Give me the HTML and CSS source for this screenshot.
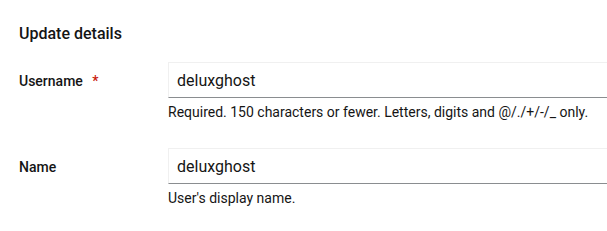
FILE: index.html
```html
<!DOCTYPE html>
<html lang="en">
<head>
  <meta charset="UTF-8" />
  <title>Update details</title>
  <link rel="stylesheet" href="styles.css">
</head>
<body>
  <div class="panel">
    <h2 class="title">Update details</h2>

    <div class="row">
      <label class="label" for="username">Username <span class="req">*</span></label>
      <div class="field">
        <input class="input" id="username" type="text" value="deluxghost" />
        <div class="helper">Required. 150 characters or fewer. Letters, digits and @/./+/-/_ only.</div>
      </div>
    </div>

    <div class="row">
      <label class="label" for="name">Name</label>
      <div class="field">
        <input class="input" id="name" type="text" value="deluxghost" />
        <div class="helper">User's display name.</div>
      </div>
    </div>
  </div>
</body>
</html>
```

FILE: styles.css
```css
html, body {
  margin: 0;
  padding: 0;
  background: #fff;
  overflow: hidden;
  font-family: Roboto, sans-serif;
  color: #151515;
}

.panel {
  padding: 22px 0 0 19px;
}

.title {
  margin: 0 0 16px;
  font-size: 16px;
  line-height: 24px;
  font-weight: 500;
}

.row {
  display: grid;
  grid-template-columns: 149px 1fr;
  margin-bottom: 25px;
}

.label {
  font-size: 14px;
  font-weight: 500;
  line-height: 21px;
  padding-top: 9px;
}

.req {
  color: #c9190b;
  margin-left: 6px;
}

.input {
  display: block;
  box-sizing: border-box;
  width: 100%;
  height: 36px;
  margin: 0;
  padding: 5px 8px;
  font-family: inherit;
  font-size: 16px;
  color: #151515;
  border: 1px solid #f0f0f0;
  border-right: none;
  border-bottom-color: #8a8d90;
  outline: none;
}

.helper {
  margin-top: 4px;
  font-size: 14px;
  line-height: 21px;
}
```
